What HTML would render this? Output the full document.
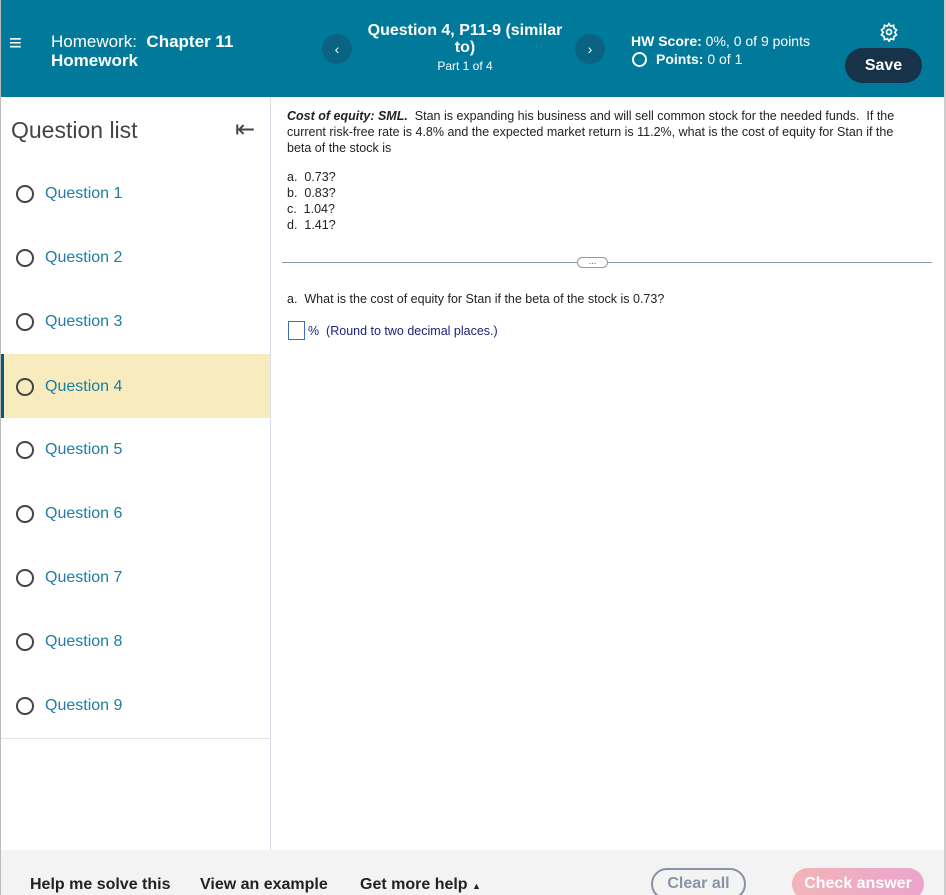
<!DOCTYPE html>
<html><head><meta charset="utf-8"><style>
*{box-sizing:border-box;margin:0;padding:0}
html,body{width:946px;height:895px;overflow:hidden}
body{font-family:"Liberation Sans",Arial,sans-serif;background:#fff;position:relative}
.edge{position:absolute;top:0;height:895px;width:1px;background:#bbb}
.hdr{position:absolute;left:0;top:0;width:946px;height:97px;background:#00799a;color:#fff}
.abs{position:absolute}
.circ{position:absolute;width:30px;height:30px;border-radius:50%;background:#0a6383;color:#fff;font-size:14px;text-align:center;line-height:30px}
.side{position:absolute;left:0;top:97px;width:271px;height:753px;border-right:1px solid #d8dde6}
.q{position:absolute;left:0;width:270px;height:64px;color:#1a7ea0;font-size:16px}
.q span.r{position:absolute;left:16px;top:24px;width:18px;height:18px;border:2px solid #444;border-radius:50%}
.q span.t{position:absolute;left:45px;top:24px}
.main{position:absolute;left:287px;font-size:12.5px;color:#222;white-space:nowrap}
.foot{position:absolute;left:0;top:850px;width:946px;height:45px;background:#f3f3f3;font-size:16px;font-weight:bold;color:#222}
</style></head><body>
<div class="hdr">
 <div class="abs" style="left:9px;top:30px;font-size:22px;">&#8801;</div>
 <div class="abs" style="left:51px;top:32px;font-size:17px;line-height:19px;">Homework:&nbsp; <b>Chapter 11</b><br><b>Homework</b></div>
 <div class="circ" style="left:322px;top:34px;">&#8249;</div>
 <div class="abs" style="left:360px;top:22px;width:210px;text-align:center;font-size:16px;font-weight:bold;line-height:17px;">Question 4, P11-9 (similar<br>to)</div>
 <div class="abs" style="left:360px;top:59px;width:210px;text-align:center;font-size:12px;">Part 1 of 4</div>
 <div class="circ" style="left:575px;top:34px;">&#8250;</div>
 <div class="abs" style="left:631px;top:33px;font-size:14px;"><b>HW Score:</b> 0%, 0 of 9 points</div>
 <div class="abs" style="left:632px;top:52px;width:15px;height:15px;border:2px solid #fff;border-radius:50%"></div>
 <div class="abs" style="left:656px;top:51px;font-size:14px;"><b>Points:</b> 0 of 1</div>
 <svg class="abs" style="left:879px;top:22px" width="20" height="20" viewBox="0 0 24 24" fill="none" stroke="#fff" stroke-width="2"><circle cx="12" cy="12" r="3"/><path d="M12 2l2 3 3.5-1 .5 3.5 3 2-2 3 2 3-3 2-.5 3.5-3.5-1-2 3-2-3-3.5 1-.5-3.5-3-2 2-3-2-3 3-2 .5-3.5 3.5 1z"/></svg>
 <div class="abs" style="left:845px;top:48px;width:77px;height:35px;border-radius:18px;background:#16334a;text-align:center;line-height:35px;font-size:16px;font-weight:bold">Save</div>
</div>
<div class="side">
 <div class="abs" style="left:11px;top:20px;font-size:23px;color:#444">Question list</div>
 <div class="abs" style="left:235px;top:18px;font-size:24px;color:#444">&#8676;</div>
 <div class="q" style="top:64px"><span class="r"></span><span class="t">Question 1</span></div>
 <div class="q" style="top:128px"><span class="r"></span><span class="t">Question 2</span></div>
 <div class="q" style="top:192px"><span class="r"></span><span class="t">Question 3</span></div>
 <div class="q" style="top:257px;background:#f8ecbf;border-left:4px solid #0a5a73"><span class="r" style="left:12px"></span><span class="t" style="left:41px">Question 4</span></div>
 <div class="q" style="top:320px"><span class="r"></span><span class="t">Question 5</span></div>
 <div class="q" style="top:384px"><span class="r"></span><span class="t">Question 6</span></div>
 <div class="q" style="top:448px"><span class="r"></span><span class="t">Question 7</span></div>
 <div class="q" style="top:512px"><span class="r"></span><span class="t">Question 8</span></div>
 <div class="q" style="top:576px;height:66px;border-bottom:1px solid #e4e4e4"><span class="r"></span><span class="t">Question 9</span></div>
</div>
<div class="main" style="top:108px;line-height:16px"><b><i>Cost of equity: SML.</i></b>&nbsp; Stan is expanding his business and will sell common stock for the needed funds.&nbsp; If the<br>current risk-free rate is 4.8% and the expected market return is 11.2%, what is the cost of equity for Stan if the<br>beta of the stock is</div>
<div class="main" style="top:169px;line-height:16px">a.&nbsp; 0.73?<br>b.&nbsp; 0.83?<br>c.&nbsp; 1.04?<br>d.&nbsp; 1.41?</div>
<div class="abs" style="left:282px;top:262px;width:650px;height:1px;background:#8a9aa8"></div>
<div class="abs" style="left:577px;top:257px;width:31px;height:11px;border:1px solid #8a9aa8;border-radius:6px;background:#fff;font-size:9px;line-height:6px;text-align:center;color:#555">...</div>
<div class="main" style="top:292px">a.&nbsp; What is the cost of equity for Stan if the beta of the stock is 0.73?</div>
<div class="abs" style="left:288px;top:321px;width:17px;height:19px;border:1px solid #3a6fc4"></div>
<div class="main" style="left:308px;top:324px;color:#1a237e">% &nbsp;(Round to two decimal places.)</div>
<div class="foot">
 <div class="abs" style="left:30px;top:26px">Help me solve this</div>
 <div class="abs" style="left:200px;top:26px">View an example</div>
 <div class="abs" style="left:360px;top:26px">Get more help <span style="font-size:9px">&#9650;</span></div>
 <div class="abs" style="left:651px;top:18px;width:95px;height:32px;border:2px solid #8a93a6;border-radius:16px;color:#8a93a6;text-align:center;line-height:28px">Clear all</div>
 <div class="abs" style="left:792px;top:18px;width:132px;height:32px;border-radius:16px;background:linear-gradient(90deg,#f2b4b8,#eba5cc);color:#fff;text-align:center;line-height:32px">Check answer</div>
</div>
<div class="edge" style="left:0"></div>
<div class="edge" style="left:944px;width:2px;background:#ccc"></div>
</body></html>
